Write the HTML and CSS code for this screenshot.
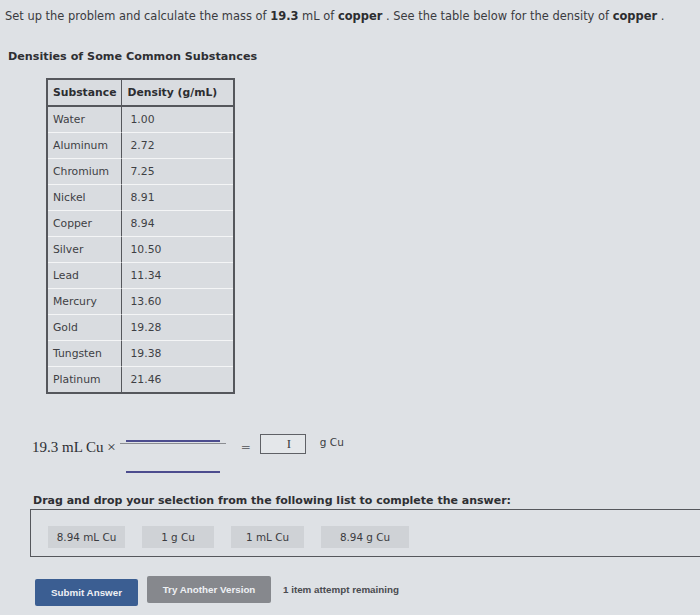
FILE: index.html
```html
<!DOCTYPE html>
<html>
<head>
<meta charset="utf-8">
<link rel="stylesheet" href="styles.css">
</head>
<body>
<div class="page">
  <p class="question">Set up the problem and calculate the mass of <b>19.3</b> mL of <b>copper</b> . See the table below for the density of <b>copper</b> .</p>
  <h2 class="title">Densities of Some Common Substances</h2>
  <table class="dens">
    <thead>
      <tr><th>Substance</th><th>Density (g/mL)</th></tr>
    </thead>
    <tbody>
      <tr><td>Water</td><td>1.00</td></tr>
      <tr><td>Aluminum</td><td>2.72</td></tr>
      <tr><td>Chromium</td><td>7.25</td></tr>
      <tr><td>Nickel</td><td>8.91</td></tr>
      <tr><td>Copper</td><td>8.94</td></tr>
      <tr><td>Silver</td><td>10.50</td></tr>
      <tr><td>Lead</td><td>11.34</td></tr>
      <tr><td>Mercury</td><td>13.60</td></tr>
      <tr><td>Gold</td><td>19.28</td></tr>
      <tr><td>Tungsten</td><td>19.38</td></tr>
      <tr><td>Platinum</td><td>21.46</td></tr>
    </tbody>
  </table>

  <div class="equation">
    <span class="given">19.3 mL Cu ×</span>
    <span class="fraction">
      <span class="slot num"></span>
      <span class="bar"></span>
      <span class="slot den"></span>
    </span>
    <span class="equals">=</span>
    <span class="answer"><span class="cursor">I</span></span>
    <span class="unit">g Cu</span>
  </div>

  <p class="drag-label">Drag and drop your selection from the following list to complete the answer:</p>
  <div class="choices">
    <span class="chip">8.94 mL Cu</span>
    <span class="chip">1 g Cu</span>
    <span class="chip">1 mL Cu</span>
    <span class="chip">8.94 g Cu</span>
  </div>

  <div class="actions">
    <button class="btn submit">Submit Answer</button>
    <button class="btn another">Try Another Version</button>
    <span class="attempts">1 item attempt remaining</span>
  </div>
</div>
</body>
</html>
```

FILE: styles.css
```css
html, body {
  margin: 0;
  padding: 0;
}
body {
  background: #dee1e5;
  font-family: "DejaVu Sans", Verdana, sans-serif;
  color: #3a3b3f;
  width: 700px;
  height: 615px;
  overflow: hidden;
}
.page {
  padding: 8px 0 0 5px;
}
.question {
  margin: 0;
  font-size: 11.45px;
  line-height: 16px;
}
.question b {
  color: #2c2d30;
}
.title {
  margin: 25px 0 0 3px;
  font-size: 11.2px;
  line-height: 16px;
  font-weight: bold;
  color: #2e2f33;
}
.dens {
  margin: 13px 0 0 41px;
  border: 2px solid #55575c;
  border-collapse: separate;
  border-spacing: 0;
  font-size: 10.8px;
  color: #3e3f44;
  background: #d9dce0;
}
.dens th, .dens td {
  height: 25px;
  padding: 0 5px;
  text-align: left;
  border-right: 1px solid #f4f5f6;
  border-bottom: 1px solid #f4f5f6;
}
.dens th:last-child, .dens td:last-child {
  border-right: 0;
}
.dens th {
  font-weight: bold;
  color: #2c2d31;
  border-bottom: 2px solid #55575c;
  height: 25px;
}
.dens th:first-child, .dens td:first-child {
  border-right: 1px solid #55575c;
  width: 62px;
}
.dens td:last-child {
  width: 98px;
  padding-left: 8px;
}
.dens tbody tr:last-child td {
  border-bottom: 0;
}
.equation {
  display: flex;
  align-items: flex-start;
  margin: 38px 0 0 27px;
  height: 45px;
}
.given {
  font-family: "Liberation Serif", "Times New Roman", serif;
  font-size: 15px;
  line-height: 18px;
  color: #2d2e33;
  margin-top: 6px;
  white-space: nowrap;
}
.fraction {
  display: flex;
  flex-direction: column;
  align-items: center;
  margin: 8px 0 0 4px;
  width: 106px;
}
.slot {
  display: block;
  width: 94px;
  height: 2px;
  background: #4c4c8e;
}
.bar {
  display: block;
  width: 106px;
  height: 1px;
  background: #8b8d92;
  margin-top: 1px;
}
.den {
  margin-top: 27px;
}
.equals {
  margin: 8px 0 0 15px;
  font-size: 12px;
  line-height: 14px;
  color: #6a6c71;
}
.answer {
  position: relative;
  margin: 2px 0 0 9px;
  width: 44px;
  height: 18px;
  border: 1px solid #5f6166;
  background: #e4e7ea;
}
.cursor {
  position: absolute;
  left: 26px;
  top: 1px;
  font-family: "Liberation Serif", serif;
  font-size: 13px;
  color: #3a3b40;
}
.unit {
  margin: 3px 0 0 14px;
  font-size: 10.5px;
  line-height: 14px;
  color: #3c3d42;
}
.drag-label {
  margin: 17px 0 0 28px;
  font-size: 11px;
  font-weight: bold;
  color: #2e2f33;
  line-height: 14px;
}
.choices {
  display: flex;
  gap: 17px;
  margin: 1px 0 0 25px;
  padding: 16px 0 8px 17px;
  border: 1px solid #55575c;
  border-right: 0;
  height: 22px;
}
.chip {
  display: flex;
  align-items: center;
  justify-content: center;
  background: #cfd2d6;
  font-size: 10.4px;
  color: #3a3b40;
  width: 77px;
  height: 22px;
}
.chip:nth-child(2) {
  width: 72px;
}
.chip:nth-child(3) {
  width: 73px;
}
.chip:last-child {
  width: 88px;
}
.actions {
  display: flex;
  align-items: flex-start;
  margin: 19px 0 0 30px;
}
.btn {
  border: 0;
  border-radius: 2px;
  font-family: "Liberation Sans", Arial, sans-serif;
  font-weight: bold;
  font-size: 9.8px;
  color: #eef0f4;
  height: 27px;
  padding: 0;
  white-space: nowrap;
}
.submit {
  background: #3b5e92;
  width: 103px;
  margin-top: 3px;
}
.another {
  background: #86888d;
  width: 124px;
  margin-left: 9px;
}
.attempts {
  margin: 8px 0 0 12px;
  font-family: "Liberation Sans", Arial, sans-serif;
  font-size: 9.8px;
  font-weight: bold;
  color: #4a4b50;
}
```
